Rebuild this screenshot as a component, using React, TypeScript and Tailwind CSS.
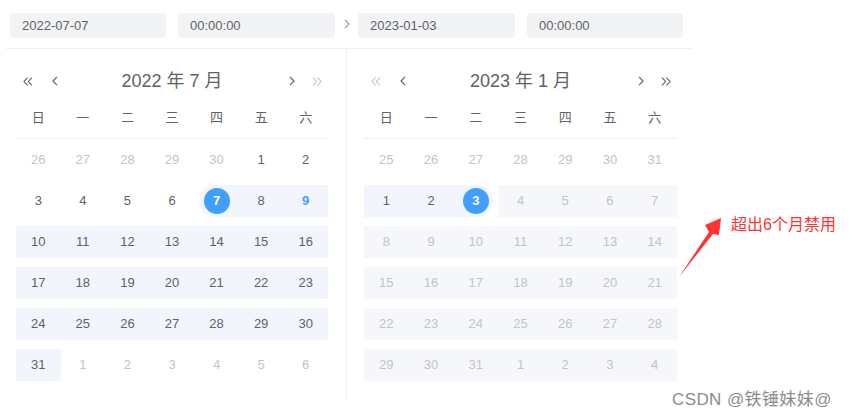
import React from "react";

type Kind = "off" | "normal" | "range" | "start" | "end" | "disabled";
type Cell = { d: number; kind: Kind; today?: boolean };

const WEEK = ["日", "一", "二", "三", "四", "五", "六"];

function buildLeft(): Cell[] {
  const cells: Cell[] = [];
  [26, 27, 28, 29, 30].forEach((d) => cells.push({ d, kind: "off" }));
  for (let d = 1; d <= 31; d++) {
    if (d < 7) cells.push({ d, kind: "normal" });
    else if (d === 7) cells.push({ d, kind: "start" });
    else cells.push({ d, kind: "range", today: d === 9 });
  }
  [1, 2, 3, 4, 5, 6].forEach((d) => cells.push({ d, kind: "off" }));
  return cells;
}

function buildRight(): Cell[] {
  const cells: Cell[] = [];
  [25, 26, 27, 28, 29, 30, 31].forEach((d) => cells.push({ d, kind: "off" }));
  for (let d = 1; d <= 31; d++) {
    if (d < 3) cells.push({ d, kind: "range" });
    else if (d === 3) cells.push({ d, kind: "end" });
    else cells.push({ d, kind: "disabled" });
  }
  [1, 2, 3, 4].forEach((d) => cells.push({ d, kind: "disabled" }));
  return cells;
}

function Chevron({ dir, light }: { dir: "left" | "right"; light?: boolean }) {
  return (
    <svg width="6" height="10" viewBox="0 0 6 10" className={light ? "text-[#c0c4cc]" : "text-[#606266]"}>
      <path
        d={dir === "left" ? "M5 0.8 L1 5 L5 9.2" : "M1 0.8 L5 5 L1 9.2"}
        fill="none"
        stroke="currentColor"
        strokeWidth="1.2"
      />
    </svg>
  );
}

function DoubleChevron({ dir, light }: { dir: "left" | "right"; light?: boolean }) {
  return (
    <svg width="10" height="9" viewBox="0 0 10 9" className={light ? "text-[#c0c4cc]" : "text-[#606266]"}>
      <path
        d={
          dir === "left"
            ? "M4.6 0.6 L1 4.5 L4.6 8.4 M9 0.6 L5.4 4.5 L9 8.4"
            : "M1 0.6 L4.6 4.5 L1 8.4 M5.4 0.6 L9 4.5 L5.4 8.4"
        }
        fill="none"
        stroke="currentColor"
        strokeWidth="1.1"
      />
    </svg>
  );
}

function DateCell({ c }: { c: Cell }) {
  let box = "";
  let text = "text-[#606266]";
  if (c.kind === "off") text = "text-[#c0c4cc]";
  if (c.kind === "range") box = "bg-[#f2f6fc]";
  if (c.kind === "start") box = "bg-[#f2f6fc] ml-[5px] pr-[5px] rounded-l-full";
  if (c.kind === "end") box = "bg-[#f2f6fc] mr-[5px] pl-[5px] rounded-r-full";
  if (c.kind === "disabled") {
    box = "bg-[#f5f7fa]";
    text = "text-[#c0c4cc]";
  }
  if (c.today) text = "text-[#409eff] font-bold";
  const selected = c.kind === "start" || c.kind === "end";

  return (
    <div className="h-[41px] flex items-center">
      <div className={`h-[32px] flex-1 flex items-center justify-center ${box}`}>
        {selected ? (
          <span className="w-[26px] h-[26px] rounded-full bg-[#409eff] text-white font-bold flex items-center justify-center">
            {c.d}
          </span>
        ) : (
          <span className={text}>{c.d}</span>
        )}
      </div>
    </div>
  );
}

function MonthPanel({
  title,
  cells,
  prevYearLight,
  nextYearLight,
  tableClass,
}: {
  title: string;
  cells: Cell[];
  prevYearLight?: boolean;
  nextYearLight?: boolean;
  tableClass: string;
}) {
  return (
    <div className={`pt-[16px] pb-[16px] ${tableClass}`}>
      <div className="h-[32px] flex items-center">
        <div className="w-[44px] flex items-center">
          <span className="ml-[7px] flex">
            <DoubleChevron dir="left" light={prevYearLight} />
          </span>
          <span className="ml-[19px] flex">
            <Chevron dir="left" />
          </span>
        </div>
        <div className="flex-1 text-center text-[18px] text-[#606266] leading-none">{title}</div>
        <div className="w-[44px] flex items-center justify-end">
          <span className="flex">
            <Chevron dir="right" />
          </span>
          <span className="ml-[17px] mr-[6px] flex">
            <DoubleChevron dir="right" light={nextYearLight} />
          </span>
        </div>
      </div>
      <div className="h-[42px] grid grid-cols-7 items-center border-b border-[#ebeef5] text-[13px] text-[#606266]">
        {WEEK.map((w) => (
          <div key={w} className="text-center">
            {w}
          </div>
        ))}
      </div>
      <div className="grid grid-cols-7 text-[13px]">
        {cells.map((c, i) => (
          <DateCell key={i} c={c} />
        ))}
      </div>
    </div>
  );
}

function Field({ value, className }: { value: string; className: string }) {
  return (
    <div
      className={`h-[25px] rounded-[4px] bg-[#f2f3f5] pl-[12px] flex items-center text-[13px] text-[#606266] ${className}`}
    >
      {value}
    </div>
  );
}

export default function App() {
  return (
    <div
      className="relative w-[849px] h-[418px] bg-white overflow-hidden"
      style={{ fontFamily: '"Liberation Sans", "Noto Sans CJK SC", sans-serif' }}
    >
      <div className="ml-[6px] w-[686px]">
        <div className="h-[49px] border-b border-[#eff0f3] pt-[13px] pl-[4px] flex items-start">
          <Field value="2022-07-07" className="w-[156px]" />
          <Field value="00:00:00" className="w-[157px] ml-[12px]" />
          <div className="w-[23px] h-[20px] flex items-center justify-center pt-[1px]">
            <svg width="6" height="10" viewBox="0 0 6 10" className="text-[#909399]">
              <path d="M1 0.8 L5 5 L1 9.2" fill="none" stroke="currentColor" strokeWidth="1.1" />
            </svg>
          </div>
          <Field value="2023-01-03" className="w-[157px]" />
          <Field value="00:00:00" className="w-[156px] ml-[12px]" />
        </div>
        <div className="flex">
          <div className="w-[341px] border-r border-[#eff0f3]">
            <MonthPanel title="2022 年 7 月" cells={buildLeft()} nextYearLight tableClass="ml-[10px] w-[312px]" />
          </div>
          <div className="w-[345px]">
            <MonthPanel title="2023 年 1 月" cells={buildRight()} prevYearLight tableClass="ml-[17px] w-[313px]" />
          </div>
        </div>
      </div>

      <svg className="absolute left-0 top-0" width="849" height="418">
        <polygon
          points="679,277 709,232 705,225 721,218 719,235 713,234"
          fill="#ff3333"
        />
      </svg>
      <div className="absolute left-[731px] top-[216px] text-[16px] leading-[18px] text-[#ff3333]">
        超出6个月禁用
      </div>
      <div className="absolute left-[672px] top-[390px] text-[17px] leading-[20px] tracking-[0.4px] text-[#8c8c8c]">
        CSDN @铁锤妹妹@
      </div>
    </div>
  );
}
